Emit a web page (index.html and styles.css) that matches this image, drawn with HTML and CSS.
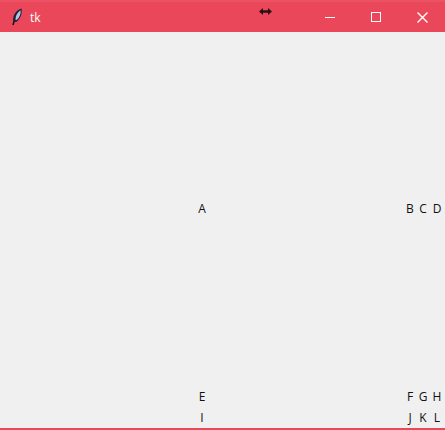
FILE: index.html
```html
<!DOCTYPE html>
<html>
<head>
  <link rel="stylesheet" href="styles.css">
</head>
<body>
  <div class="window">
    <div class="titlebar">
      <svg class="feather" width="12" height="18" viewBox="0 0 12 18">
        <path d="M2 17 L3.5 12" stroke="#111" stroke-width="1.5" fill="none"/>
        <path d="M2.2 13 C1.5 8 4.5 2.5 10.5 0.5 C11.5 6 9 11.5 5 14 Z" fill="#1f2036"/>
        <path d="M4.5 12 C4.2 8.5 6 4.5 9.6 2.2 C10 6 8.5 10 5.5 12 Z" fill="#b4c4e6"/>
      </svg>
      <span class="title">tk</span>
      <svg class="cursor" width="13" height="7" viewBox="0 0 13 7">
        <path d="M0 3.5 L4 0 V2.3 H9 V0 L13 3.5 L9 7 V4.7 H4 V7 Z" fill="#2b1115"/>
      </svg>
      <div class="controls">
        <div class="control">
          <svg width="10" height="10" viewBox="0 0 10 10"><path d="M0 5.5 H10" stroke="#fff" fill="none"/></svg>
        </div>
        <div class="control">
          <svg width="10" height="10" viewBox="0 0 10 10"><rect x="0.5" y="0.5" width="9" height="9" stroke="#fff" fill="none"/></svg>
        </div>
        <div class="control">
          <svg width="11" height="11" viewBox="0 0 11 11"><path d="M0.5 0.5 L10.5 10.5 M10.5 0.5 L0.5 10.5" stroke="#fff" stroke-width="1.4" fill="none"/></svg>
        </div>
      </div>
    </div>
    <div class="content">
      <span>A</span><span>B</span><span>C</span><span>D</span>
      <span>E</span><span>F</span><span>G</span><span>H</span>
      <span>I</span><span>J</span><span>K</span><span>L</span>
    </div>
  </div>
</body>
</html>
```

FILE: styles.css
```css
html, body {
  margin: 0;
  padding: 0;
}

.window {
  width: 445px;
  height: 430px;
  display: flex;
  flex-direction: column;
  box-sizing: border-box;
  background-color: #f0f0f0;
  border-bottom: 2px solid #e9485a;
  font-family: "Open Sans", sans-serif;
  overflow: hidden;
}

.titlebar {
  position: relative;
  height: 32px;
  flex: none;
  display: flex;
  align-items: center;
  background-color: #ea485a;
  border-top: 2px solid #ed5264;
  box-sizing: border-box;
  padding-left: 11px;
  color: #fff;
}

.title {
  margin-left: 7px;
  font-size: 12px;
}

.cursor {
  position: absolute;
  left: 259px;
  top: 6px;
}

.controls {
  margin-left: auto;
  display: flex;
  height: 100%;
}

.control {
  width: 46px;
  display: flex;
  align-items: center;
  justify-content: center;
}

.content {
  flex: 1;
  display: grid;
  grid-template-columns: 404px 12px 14px 14px 1fr;
  grid-template-rows: 1fr 21px 21px;
  font-size: 12px;
  color: #111;
}

.content span {
  display: flex;
  align-items: center;
  justify-content: center;
}

.content span:nth-child(-n+4) {
  padding-bottom: 2px;
}

.content span:nth-child(4n+1) {
  grid-column: 1;
}
```
